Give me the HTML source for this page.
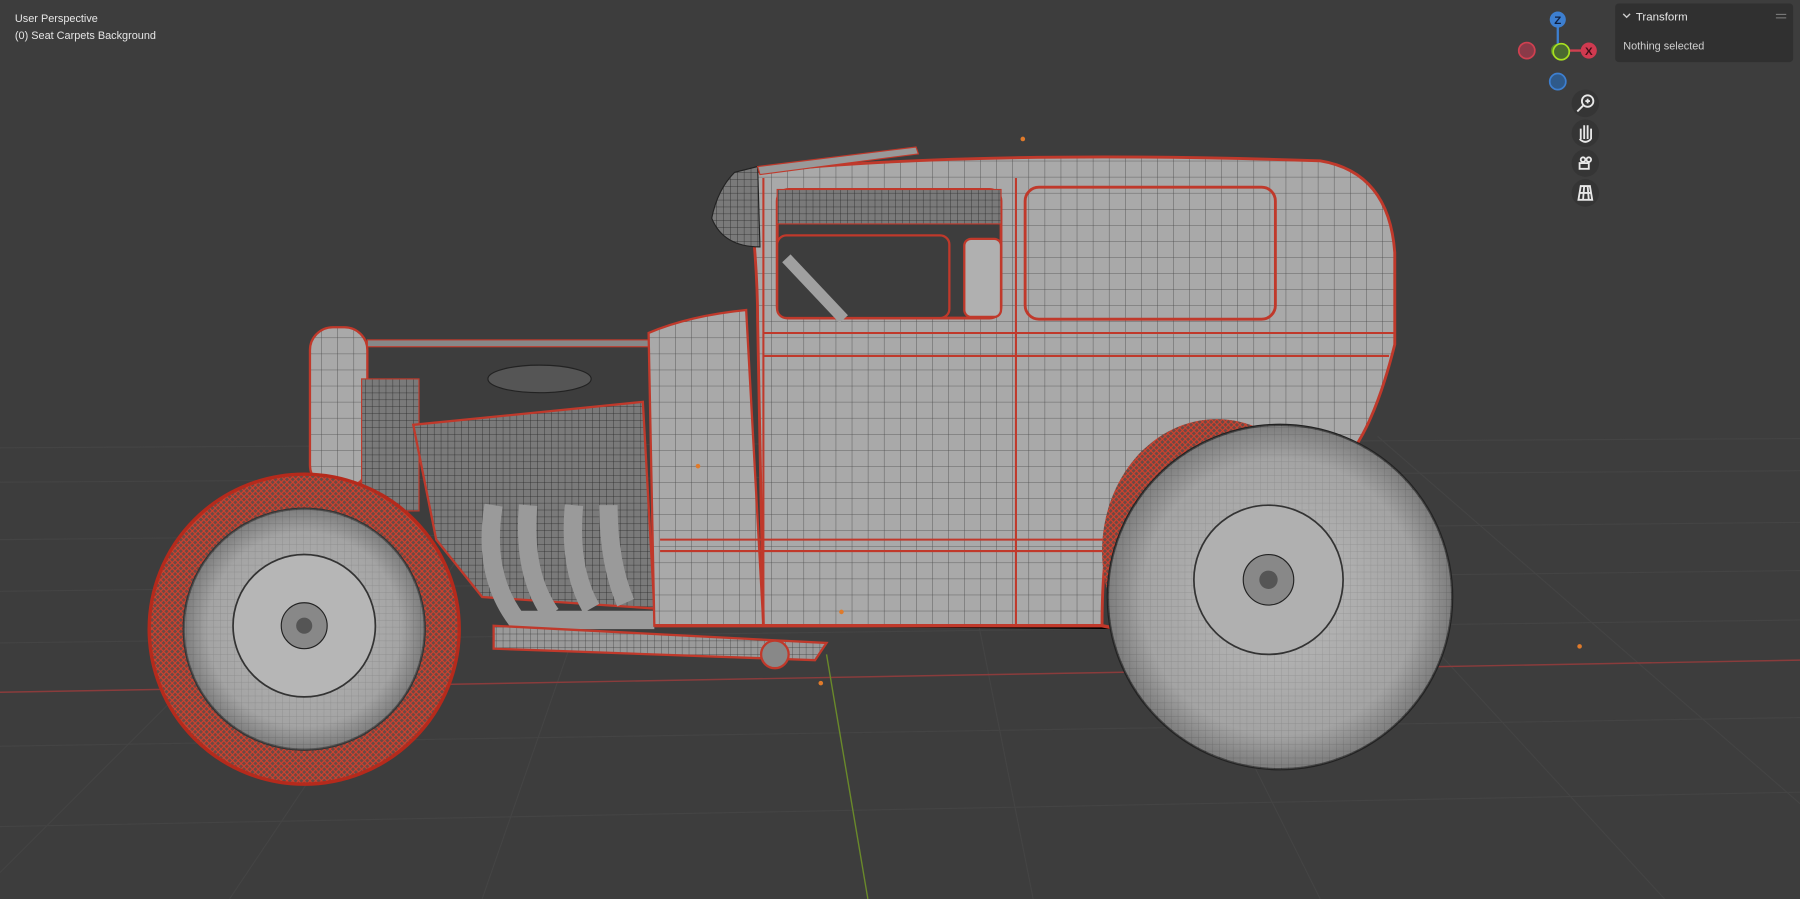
<!DOCTYPE html>
<html><head><meta charset="utf-8"><style>
html,body{margin:0;padding:0;background:#3d3d3d;overflow:hidden}
.wrap{position:relative;width:1800px;height:899px}
svg{position:absolute;left:0;top:0}
</style></head><body><div class="wrap">
<svg width="1800" height="899" viewBox="0 0 1568 783" xmlns="http://www.w3.org/2000/svg">
<defs>
<pattern id="mesh" width="14" height="14" patternUnits="userSpaceOnUse">
<rect width="14" height="14" fill="#a9a9a9"/><path d="M0 0H14M0 0V14" stroke="#4a4a4a" stroke-width="0.7"/></pattern>
<pattern id="fine" width="6" height="6" patternUnits="userSpaceOnUse">
<rect width="6" height="6" fill="#9a9a9a"/><path d="M0 0H6M0 0V6" stroke="#3a3a3a" stroke-width="0.6"/></pattern>
<pattern id="dark" width="6" height="6" patternUnits="userSpaceOnUse">
<rect width="6" height="6" fill="#7a7a7a"/><path d="M0 0H6M0 0V6" stroke="#2a2a2a" stroke-width="0.7"/></pattern>
<pattern id="tire" width="5" height="5" patternUnits="userSpaceOnUse">
<rect width="5" height="5" fill="#6a4a44"/><path d="M0 0L5 5M5 0L0 5" stroke="#d8402c" stroke-width="0.9"/></pattern>
<radialGradient id="rim" cx="0.5" cy="0.5" r="0.5"><stop offset="0" stop-color="#c8c8c8"/><stop offset="0.8" stop-color="#a8a8a8"/><stop offset="1" stop-color="#707070"/></radialGradient>
</defs>
<rect width="1568" height="783" fill="#3d3d3d"/>
<g stroke="#444" stroke-width="1" fill="none">
<path d="M0 470L1568 455M0 515L1568 497M0 560L1568 540M0 650L1568 625M0 720L1568 690M0 420L1568 410M0 390L1568 382"/>
<path d="M420 783L560 380M200 783L470 380M0 760L380 380M900 783L820 380M1150 783L950 380M1450 783L1080 380M1568 700L1200 380"/>
</g>
<path d="M0 603L1568 575" stroke="#8a3c3c" stroke-width="1.3"/>
<path d="M720 570L756 783" stroke="#6a8a2a" stroke-width="1.2"/>
<rect x="270" y="285" width="50" height="140" rx="20" fill="url(#mesh)" stroke="#c0392b" stroke-width="2"/>
<rect x="315" y="330" width="50" height="115" fill="url(#dark)" stroke="#c0392b"/>
<rect x="320" y="296" width="250" height="6" fill="#888" stroke="#c0392b"/>
<path d="M360 370L560 350L570 530L420 520L380 470Z" fill="url(#dark)" stroke="#c0392b" stroke-width="2"/>
<ellipse cx="470" cy="330" rx="45" ry="12" fill="#555" stroke="#222"/>
<path d="M430 440q-10 60 20 100h120M460 440q-5 60 20 95M500 440q-5 55 15 90M530 440q0 50 15 85" stroke="#9a9a9a" stroke-width="16" fill="none"/>
<path d="M430 545L720 560L710 575L430 565Z" fill="url(#fine)" stroke="#c0392b" stroke-width="2"/>
<circle cx="675" cy="570" r="12" fill="#888" stroke="#c0392b" stroke-width="2"/>
<path d="M565 290Q600 275 650 270L665 545L570 545Z" fill="url(#mesh)" stroke="#c0392b" stroke-width="2"/>
<path d="M655 150Q850 130 1150 140Q1210 150 1215 220L1215 300Q1200 360 1180 390L1000 390Q960 420 960 545L665 545L660 280Q660 240 655 190Z" fill="url(#mesh)" stroke="#c0392b" stroke-width="2.5"/>
<path d="M640 150L660 145L662 215Q630 215 620 190Q625 165 640 150Z" fill="url(#dark)" stroke="#222"/>
<path d="M660 145L798 128L800 134L662 152Z" fill="#999" stroke="#c0392b"/>
<rect x="677" y="165" width="195" height="112" rx="10" fill="#3d3d3d" stroke="#c0392b" stroke-width="2.5"/>
<rect x="677" y="165" width="195" height="30" fill="url(#dark)" stroke="#c0392b"/>
<rect x="677" y="205" width="150" height="72" rx="8" fill="#3d3d3d" stroke="#c0392b" stroke-width="2"/>
<rect x="840" y="208" width="32" height="68" rx="6" fill="#b0b0b0" stroke="#c0392b" stroke-width="2"/>
<path d="M685 225L735 278" stroke="#a0a0a0" stroke-width="10"/>
<rect x="893" y="163" width="218" height="115" rx="12" fill="url(#mesh)" stroke="#c0392b" stroke-width="2.5"/>
<path d="M665 290H1215M665 310H1210M575 470H1010M575 480H1000M885 155V545M665 155V545" stroke="#c0392b" stroke-width="1.8"/>
<path d="M570 545L960 545L975 548" stroke="#c0392b" stroke-width="3"/>
<ellipse cx="1060" cy="480" rx="100" ry="115" fill="url(#tire)"/>
<circle cx="1115" cy="520" r="150" fill="url(#rim)" stroke="#222" stroke-width="2"/>
<circle cx="1115" cy="520" r="150" fill="url(#fine)" opacity="0.3"/>
<circle cx="1105" cy="505" r="65" fill="#b0b0b0" stroke="#333" stroke-width="1.5"/>
<circle cx="1105" cy="505" r="22" fill="#888" stroke="#222"/>
<circle cx="1105" cy="505" r="8" fill="#555"/>
<circle cx="265" cy="548" r="135" fill="url(#tire)" stroke="#b52a1c" stroke-width="3"/>
<circle cx="265" cy="548" r="105" fill="url(#rim)" stroke="#333" stroke-width="2"/>
<circle cx="265" cy="548" r="105" fill="url(#fine)" opacity="0.3"/>
<circle cx="265" cy="545" r="62" fill="#b6b6b6" stroke="#333" stroke-width="1.5"/>
<circle cx="265" cy="545" r="20" fill="#888" stroke="#222"/>
<circle cx="265" cy="545" r="7" fill="#555"/>
<g fill="#e07a2a"><circle cx="891" cy="121" r="2"/><circle cx="1376" cy="563" r="2"/><circle cx="715" cy="595" r="2"/><circle cx="733" cy="533" r="2"/><circle cx="608" cy="406" r="2"/></g>
<line x1="1357" y1="20" x2="1357" y2="44" stroke="#3d7fd0" stroke-width="2"/>
<line x1="1360" y1="44" x2="1384" y2="44" stroke="#d04050" stroke-width="2"/>
<circle cx="1330" cy="44" r="7" fill="#8a3a48" stroke="#d04050" stroke-width="1.5"/>
<circle cx="1357" cy="71" r="7" fill="#2f5a8a" stroke="#3d7fd0" stroke-width="1.5"/>
<circle cx="1357" cy="44" r="6" fill="#5a8a2a"/>
<circle cx="1360" cy="45" r="7" fill="#4a6a30" stroke="#a8e020" stroke-width="1.5"/>
<circle cx="1357" cy="17" r="7" fill="#3d7fd0"/>
<text x="1357" y="21" font-family="Liberation Sans" font-size="10" font-weight="bold" fill="#102040" text-anchor="middle">Z</text>
<circle cx="1384" cy="44" r="7" fill="#d03a50"/>
<text x="1384" y="48" font-family="Liberation Sans" font-size="10" font-weight="bold" fill="#401018" text-anchor="middle">X</text>
<g fill="#353535"><circle cx="1381" cy="90" r="12"/><circle cx="1381" cy="116" r="12"/><circle cx="1381" cy="142" r="12"/><circle cx="1381" cy="168" r="12"/></g>
<g stroke="#e8e8e8" stroke-width="1.6" fill="none">
<circle cx="1383" cy="88" r="5"/><path d="M1379 92L1374 97M1381 88h4M1383 86v4"/>
<path d="M1377 121V112M1380 121V109M1383 121V109M1386 121V112M1376 121Q1381 126 1386 121"/>
<rect x="1376" y="142" width="8" height="5"/><circle cx="1379" cy="139" r="2"/><circle cx="1384" cy="139" r="2"/>
<path d="M1375 174L1377 162H1385L1387 174ZM1376 168H1386M1380 162L1379 174M1383 162L1384 174"/>
</g>
<rect x="1407" y="3" width="155" height="51" rx="3" fill="#303030"/>
<path d="M1414 12L1417 15L1420 12" stroke="#ccc" fill="none" stroke-width="1.2"/>
<text x="1425" y="18" font-family="Liberation Sans" font-size="10" fill="#e6e6e6">Transform</text>
<text x="1414" y="43" font-family="Liberation Sans" font-size="9.5" fill="#cfcfcf">Nothing selected</text>
<g fill="#777"><rect x="1547" y="12" width="9" height="1"/><rect x="1547" y="15" width="9" height="1"/></g>
<text x="13" y="19" font-family="Liberation Sans" font-size="9.5" fill="#e6e6e6">User Perspective</text>
<text x="13" y="34" font-family="Liberation Sans" font-size="9.5" fill="#e6e6e6">(0) Seat Carpets Background</text>
</svg>
</div></body></html>
